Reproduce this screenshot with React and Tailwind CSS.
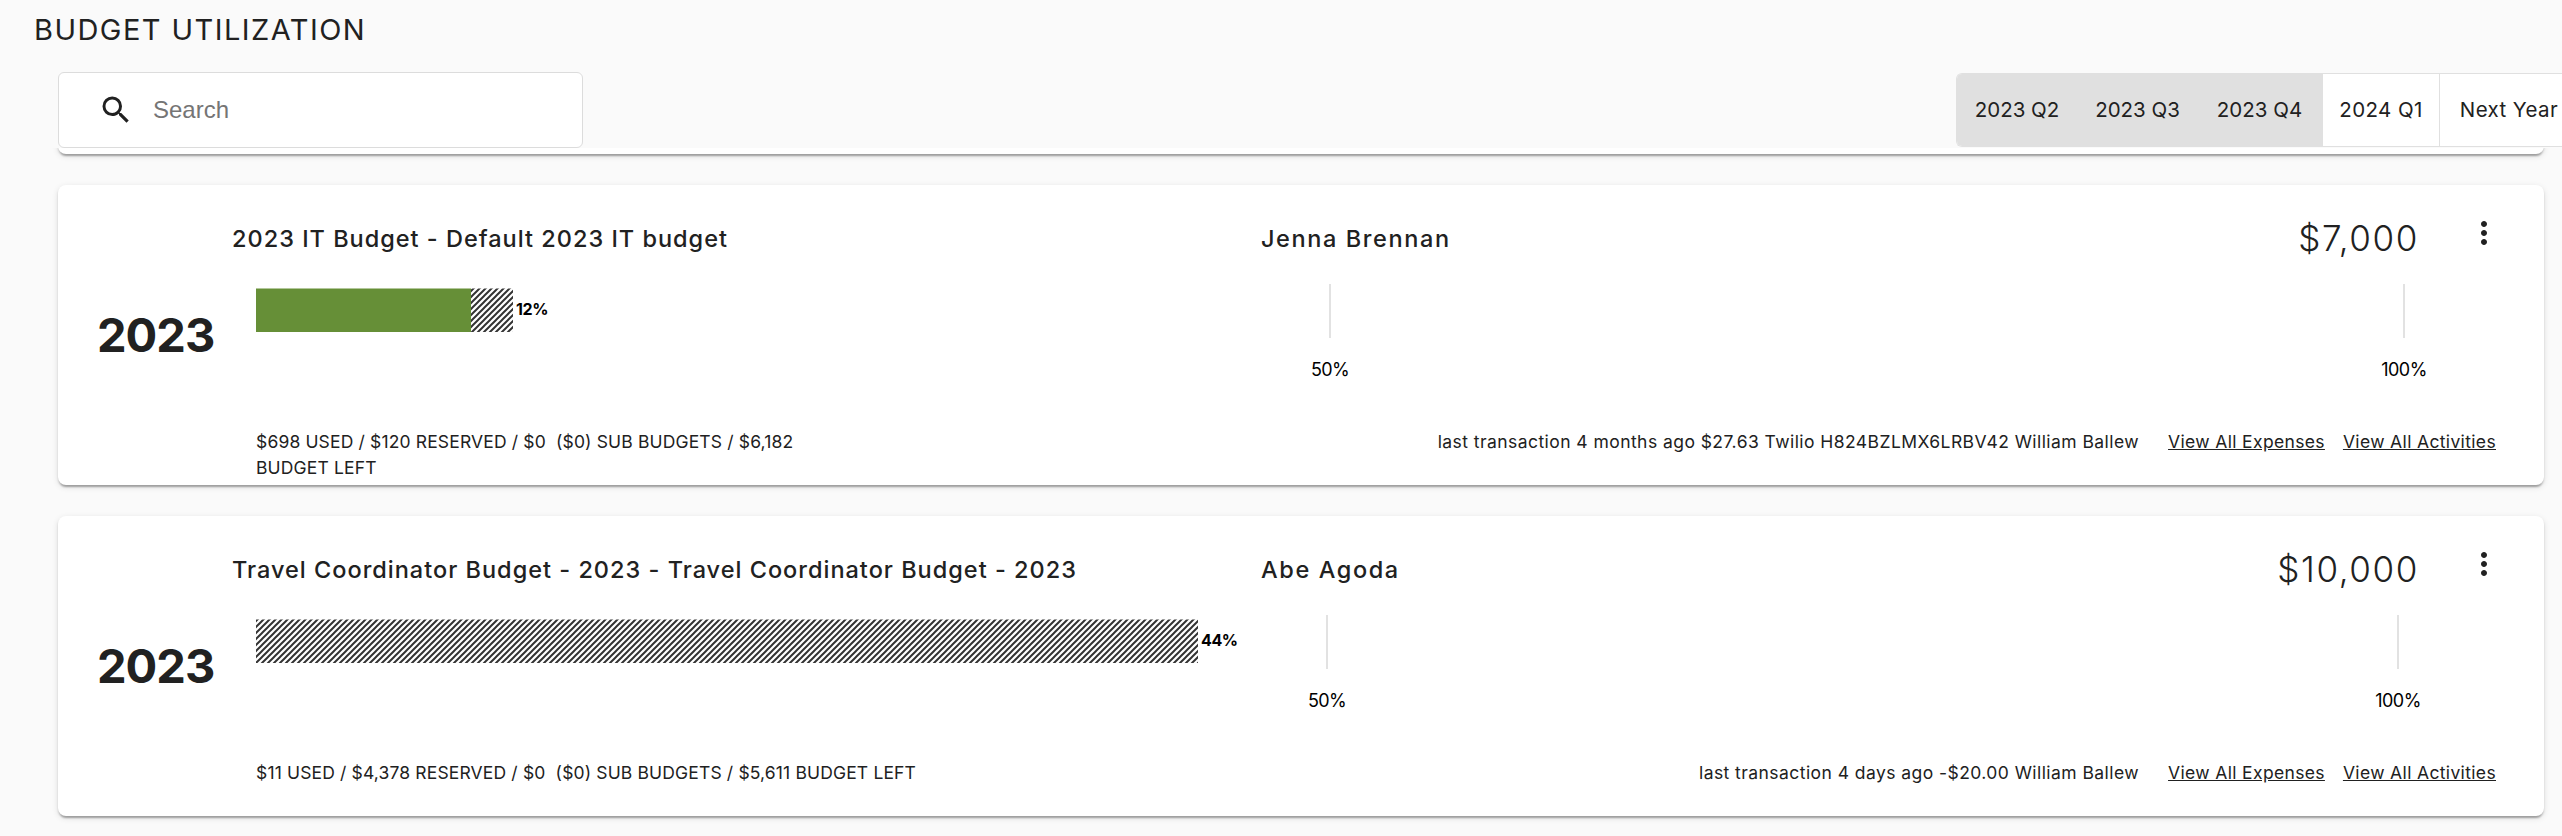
import React, { useState } from "react";
import { MdMoreVert, MdSearch } from "react-icons/md";

const quarters = [
  { label: "2023 Q2", size: "w-[120px]" },
  { label: "2023 Q3", size: "w-[121px]" },
  { label: "2023 Q4", size: "w-[125px] pr-[2px]" },
  { label: "2024 Q1", size: "w-[117px]" },
  { label: "Next Year", size: "w-[139px]" },
];

const budgets = [
  {
    id: 1,
    year: "2023",
    name: "2023 IT Budget - Default 2023 IT budget",
    owner: "Jenna Brennan",
    amount: "$7,000",
    used: 215,
    reserved: 42,
    percent: "12%",
    half: 1074,
    full: 2148,
    summary: "$698 USED / $120 RESERVED / $0\u00a0 ($0) SUB BUDGETS / $6,182\nBUDGET LEFT",
    last: "last transaction 4 months ago $27.63 Twilio H824BZLMX6LRBV42 William Ballew",
  },
  {
    id: 2,
    year: "2023",
    name: "Travel Coordinator Budget - 2023 - Travel Coordinator Budget - 2023",
    owner: "Abe Agoda",
    amount: "$10,000",
    used: 0,
    reserved: 942,
    percent: "44%",
    half: 1071,
    full: 2142,
    summary: "$11 USED / $4,378 RESERVED / $0\u00a0 ($0) SUB BUDGETS / $5,611 BUDGET LEFT",
    last: "last transaction 4 days ago -$20.00 William Ballew",
  },
];

const cardStyle =
  "rounded-lg bg-white shadow-[0_4px_2px_-2px_rgba(0,0,0,0.2),0_2px_2px_0_rgba(0,0,0,0.14),0_2px_6px_0_rgba(0,0,0,0.12)]";

const BudgetChart = ({ budget }) => {
  const end = budget.used + budget.reserved;
  const patternId = `stripes-${budget.id}`;

  return (
    <svg width="2240" height="100" className="ml-6 mt-[7px] overflow-visible">
      <defs>
        <pattern id={patternId} width="6" height="6" patternUnits="userSpaceOnUse">
          <path d="M-1,1 l2,-2 M0,6 l6,-6 M5,7 l2,-2" stroke="#333333" strokeWidth="2" />
        </pattern>
      </defs>
      <rect x={budget.half - 1} y="0" width="2" height="54" fill="#e2e2e2" />
      <rect x={budget.full - 1} y="0" width="2" height="54" fill="#e2e2e2" />
      <rect x="0" y="4.5" width={budget.used} height="43.5" fill="#668f37" />
      <rect
        x={budget.used}
        y="4.5"
        width={budget.reserved}
        height="43.5"
        fill={`url(#${patternId})`}
      />
      <text x={end + 3} y="31" fill="#000000" className="text-base font-bold tracking-[-0.4px]">
        {budget.percent}
      </text>
      <text
        x={budget.half}
        y="92"
        textAnchor="middle"
        fill="#000000"
        className="text-[18px] tracking-[-0.7px]"
      >
        50%
      </text>
      <text
        x={budget.full}
        y="92"
        textAnchor="middle"
        fill="#000000"
        className="text-[18px] tracking-[-0.5px]"
      >
        100%
      </text>
    </svg>
  );
};

const BudgetCard = ({ budget }) => {
  return (
    <div className={`flex h-[300px] shrink-0 ${cardStyle}`}>
      <div className="flex w-[174px] shrink-0 items-center pl-[39px] text-[47px] font-bold tracking-[-1px]">
        {budget.year}
      </div>
      <div className="flex flex-1 flex-col">
        <div className="flex h-[92px] items-center pt-[15px] text-[23.5px] font-medium">
          <div className="w-[1029px] whitespace-nowrap tracking-[1px]">{budget.name}</div>
          <div className="flex-1 whitespace-nowrap tracking-[1.6px]">{budget.owner}</div>
          <div className="text-[35px] font-light tracking-[1.6px]">{budget.amount}</div>
          <button className="mb-[11px] ml-[47px] mr-[42px]">
            <MdMoreVert size={36} />
          </button>
        </div>
        <BudgetChart budget={budget} />
        <div className="mt-[45px] flex justify-between pl-6 pr-12 text-[17.5px] leading-[26px]">
          <div className="whitespace-pre tracking-[0.15px]">{budget.summary}</div>
          <div className="flex whitespace-nowrap">
            <span className="tracking-[0.44px]">{budget.last}</span>
            <a href="#" className="ml-[29px] tracking-[0.35px] underline">
              View All Expenses
            </a>
            <a href="#" className="ml-[18px] tracking-[0.35px] underline">
              View All Activities
            </a>
          </div>
        </div>
      </div>
    </div>
  );
};

const App = () => {
  const [selected] = useState(["2023 Q2", "2023 Q3", "2023 Q4"]);

  return (
    <div className="flex h-[836px] w-[2562px] flex-col overflow-hidden bg-[#fafafa] font-['Inter','Noto_Sans',sans-serif] text-[#212121]">
      <h1 className="h-[72px] pl-[34px] text-[29px] font-[380] leading-[59px] tracking-[1.45px]">
        BUDGET UTILIZATION
      </h1>

      <div className="flex h-[76px] shrink-0 items-center justify-between pl-[58px]">
        <div className="flex h-[76px] w-[525px] items-center rounded-md border border-[#dcdcdc] bg-white pl-[39px]">
          <MdSearch size={36} />
          <input
            type="text"
            placeholder="Search"
            className="ml-[19px] w-[380px] font-['Liberation_Sans',Arial,sans-serif] text-2xl outline-none placeholder:text-[#757575]"
          />
        </div>
        <div className="flex h-[74px] w-[606px] overflow-hidden rounded-l-md border-y border-l border-[#e0e0e0] bg-white text-[20.5px]">
          {quarters.map((quarter) => (
            <button
              key={quarter.label}
              className={`shrink-0 whitespace-nowrap ${quarter.size} ${
                selected.includes(quarter.label) ? "bg-[#e0e0e0]" : "border-r border-[#e0e0e0] tracking-[0.4px]"
              }`}
            >
              {quarter.label}
            </button>
          ))}
        </div>
      </div>

      <div className="flex flex-1 flex-col overflow-hidden pl-[58px] pr-[18px]">
        <div className={`-mt-[294px] mb-[31px] h-[300px] shrink-0 ${cardStyle}`} />
        <div className="flex flex-col gap-[31px]">
          {budgets.map((budget) => (
            <BudgetCard key={budget.id} budget={budget} />
          ))}
        </div>
      </div>
    </div>
  );
};

export default App;
